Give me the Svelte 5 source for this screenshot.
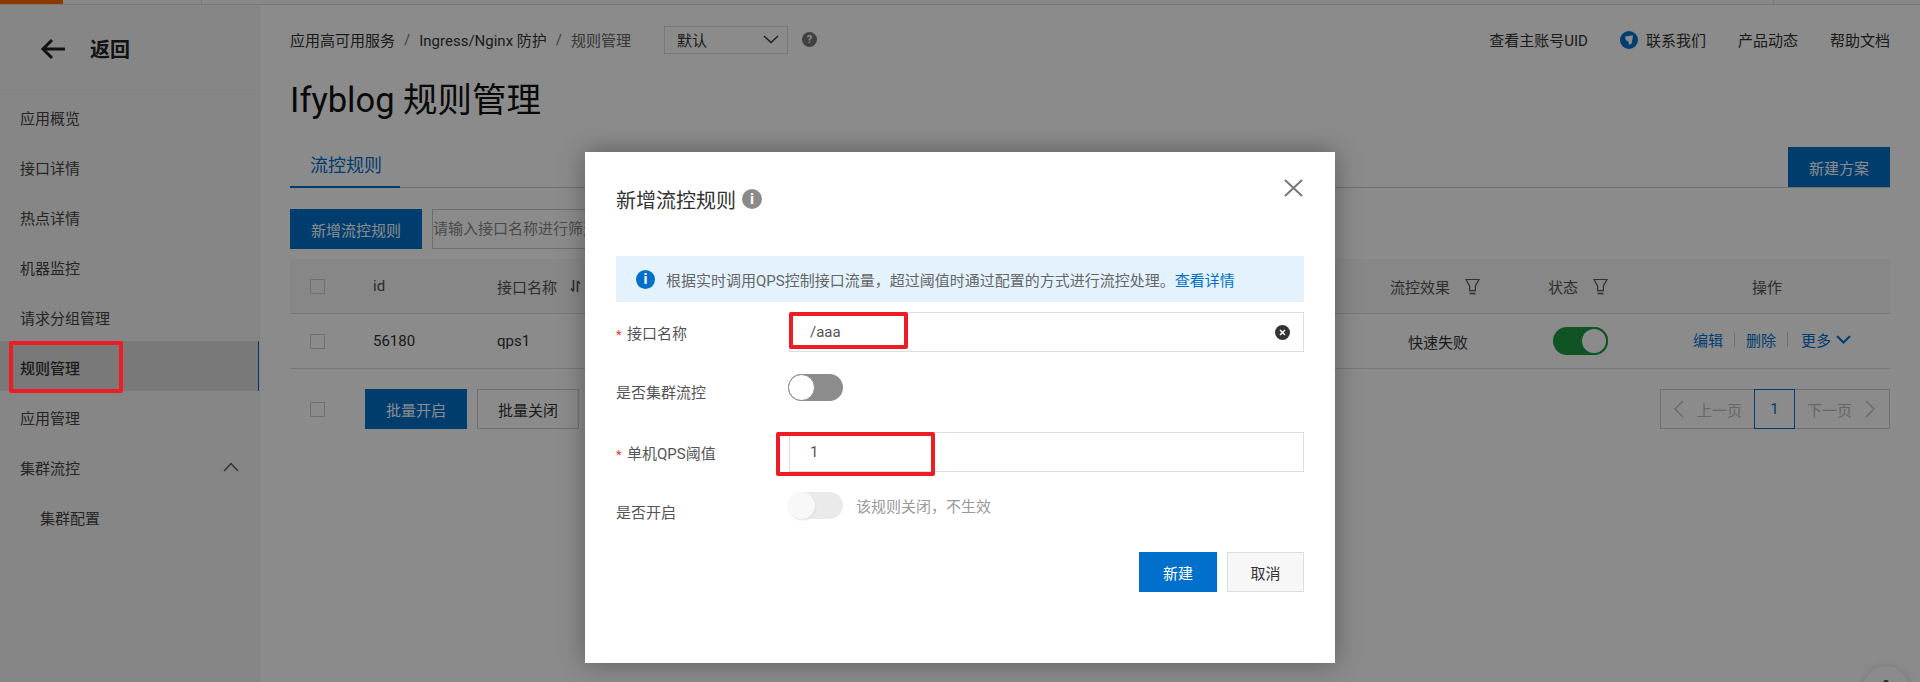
<script lang="ts">
	const navItems = ['应用概览', '接口详情', '热点详情', '机器监控', '请求分组管理', '规则管理', '应用管理'];
	const headerLinks = ['产品动态', '帮助文档'];
</script>

{#snippet filterIcon()}
	<svg class="filter" width="15" height="17" viewBox="0 0 15 17" fill="none" stroke="#5a5a5a" stroke-width="1.2">
		<path d="M1 1.500h13l-3.600 6.500v4.600H4.600V8z" />
		<path d="M4.600 15.500h5.800" stroke-width="1.600" />
	</svg>
{/snippet}

{#snippet checkbox()}
	<span class="checkbox"></span>
{/snippet}

<div class="page">
	<div class="topstrip">
		<span class="strip-brand"></span>
		<span class="strip-tab"></span>
		<span class="strip-rest"></span>
		<span class="strip-end"></span>
	</div>

	<div class="body">
		<aside class="sidebar">
			<div class="back">
				<svg width="26" height="22" viewBox="0 0 26 22" fill="none" stroke="#222" stroke-width="3">
					<path d="M25 11H3M12 2l-9 9 9 9" />
				</svg>
				<span>返回</span>
			</div>
			<nav class="nav">
				{#each navItems as item}
					<div class="nav-item" class:active={item === '规则管理'}>{item}</div>
				{/each}
				<div class="nav-item group">
					集群流控
					<svg width="16" height="10" viewBox="0 0 16 10" fill="none" stroke="#5c5c5c" stroke-width="1.4">
						<path d="M1 9l7-7.500L15 9" />
					</svg>
				</div>
				<div class="nav-item sub">集群配置</div>
			</nav>
		</aside>

		<main class="content">
			<header class="topbar">
				<div class="crumbs">
					<span>应用高可用服务</span>
					<i>/</i>
					<span>Ingress/Nginx 防护</span>
					<i>/</i>
					<span class="current">规则管理</span>
					<div class="select">
						默认
						<svg width="16" height="9" viewBox="0 0 16 9" fill="none" stroke="#333" stroke-width="1.3">
							<path d="M1 1l7 6.500L15 1" />
						</svg>
					</div>
					<span class="help">?</span>
				</div>
				<div class="links">
					<span>查看主账号UID</span>
					<span class="contact">
						<svg width="18" height="18" viewBox="0 0 18 18">
							<circle cx="9" cy="9" r="9" fill="#0070cc" />
							<path d="M5 5.500l8-1.200-1.200 8-2.600 2-.8-3.600L5.800 9z" fill="#fff" />
						</svg>
						联系我们
					</span>
					{#each headerLinks as link}
						<span>{link}</span>
					{/each}
				</div>
			</header>

			<h1>Ifyblog 规则管理</h1>

			<div class="tabs">
				<div class="tab">流控规则</div>
				<button class="btn primary new-plan" type="button">新建方案</button>
			</div>

			<div class="toolbar">
				<button class="btn primary add" type="button">新增流控规则</button>
				<div class="search">请输入接口名称进行筛选</div>
			</div>

			<div class="table">
				<div class="row head">
					<div class="cell-check">{@render checkbox()}</div>
					<div>id</div>
					<div class="name-col">
						接口名称
						<svg width="11" height="14" viewBox="0 0 11 14" fill="none" stroke="#555" stroke-width="1.600">
							<path d="M3.500 1v11M1 9.500L3.500 12.500M7.500 13V2M7.500 2L10 4.500" />
						</svg>
					</div>
					<div></div>
					<div class="with-filter">流控效果 {@render filterIcon()}</div>
					<div class="with-filter">状态 {@render filterIcon()}</div>
					<div class="center">操作</div>
				</div>
				<div class="row data">
					<div class="cell-check">{@render checkbox()}</div>
					<div>56180</div>
					<div>qps1</div>
					<div></div>
					<div class="effect">快速失败</div>
					<div class="status"><span class="switch on"><span class="knob"></span></span></div>
					<div class="actions">
						<span>编辑</span><i></i><span>删除</span><i></i><span class="more">更多</span>
						<svg width="15" height="9" viewBox="0 0 15 9" fill="none" stroke="#0070cc" stroke-width="2">
							<path d="M1 1l6.500 6.500L14 1" />
						</svg>
					</div>
				</div>
			</div>

			<div class="footer">
				<div class="cell-check">{@render checkbox()}</div>
				<button class="btn primary batch" type="button">批量开启</button>
				<button class="btn normal batch" type="button">批量关闭</button>
				<div class="pager">
					<span class="page-nav prev">
						<svg width="11" height="18" viewBox="0 0 11 18" fill="none" stroke="#c4c4c4" stroke-width="1.5"><path d="M10 1L2 9l8 8" /></svg>
						上一页
					</span>
					<span class="page-num">1</span>
					<span class="page-nav next">
						下一页
						<svg width="11" height="18" viewBox="0 0 11 18" fill="none" stroke="#c4c4c4" stroke-width="1.5"><path d="M1 1l8 8-8 8" /></svg>
					</span>
				</div>
			</div>
		</main>
	</div>

	<span class="float-btn"><span class="float-dot"></span></span>

	<div class="mask"></div>

	<div class="modal">
		<div class="modal-title">
			<span>新增流控规则</span>
			<span class="title-info">i</span>
			<svg class="close" width="19" height="18" viewBox="0 0 19 18" fill="none" stroke="#777" stroke-width="2">
				<path d="M1 1l17 16M18 1L1 17" />
			</svg>
		</div>

		<div class="alert">
			<span class="alert-icon">i</span>
			<span>根据实时调用QPS控制接口流量，超过阈值时通过配置的方式进行流控处理。</span>
			<span class="alert-link">查看详情</span>
		</div>

		<div class="form-row first">
			<div class="label"><em>*</em>接口名称</div>
			<div class="input">
				<span>/aaa</span>
				<svg width="15" height="15" viewBox="0 0 15 15">
					<circle cx="7.500" cy="7.500" r="7.500" fill="#333" />
					<path d="M5 5l5 5M10 5l-5 5" stroke="#fff" stroke-width="1.500" />
				</svg>
			</div>
		</div>

		<div class="form-row toggle-row">
			<div class="label plain">是否集群流控</div>
			<span class="switch off"><span class="knob"></span></span>
		</div>

		<div class="form-row qps">
			<div class="label"><em>*</em>单机QPS阈值</div>
			<div class="input"><span>1</span></div>
		</div>

		<div class="form-row toggle-row last">
			<div class="label plain">是否开启</div>
			<span class="switch disabled"><span class="knob"></span></span>
			<span class="hint">该规则关闭，不生效</span>
		</div>

		<div class="modal-actions">
			<button class="btn primary ok" type="button">新建</button>
			<button class="btn cancel" type="button">取消</button>
		</div>
	</div>

	<!-- red annotation boxes drawn over the screenshot -->
	<span class="mark mark-nav"></span>
	<span class="mark mark-name"></span>
	<span class="mark mark-qps"></span>
</div>

<style>
	:global(body) {
		margin: 0;
		background: #fff;
		overflow: hidden;
	}

	.page {
		position: relative;
		width: 1920px;
		height: 682px;
		overflow: hidden;
		background: #fff;
		color: #333;
		font-family: Roboto, 'Noto Sans CJK SC', sans-serif;
		font-size: 15px;
	}

	button {
		font-family: inherit;
		font-size: 15px;
		border: none;
		padding: 0;
	}

	i {
		font-style: normal;
	}

	.topstrip {
		display: flex;
		box-sizing: border-box;
		height: 5px;
		background: #fafafa;
		border-bottom: 1px solid #e0e0e0;
	}

	.strip-brand {
		width: 63px;
		background: #ff6a00;
	}

	.strip-tab {
		width: 138px;
		border-right: 1px solid #ddd;
	}

	.strip-rest {
		width: 1571px;
		border-right: 1px solid #ddd;
	}

	.strip-end {
		flex: 1;
	}

	.body {
		display: flex;
		height: 677px;
	}

	.sidebar {
		width: 259px;
		flex: none;
		background: #f6f6f6;
		border-right: 1px solid #f0f0f0;
	}

	.back {
		display: flex;
		align-items: center;
		gap: 24px;
		height: 86px;
		padding-left: 40px;
		padding-top: 2px;
		border-bottom: 1px solid #ececec;
		box-sizing: border-box;
		font-size: 20px;
		font-weight: 700;
		color: #222;
	}

	.nav-item {
		display: flex;
		align-items: center;
		justify-content: space-between;
		box-sizing: border-box;
		height: 50px;
		padding: 2px 20px 0;
		color: #444;
	}

	.nav-item.active {
		background: #dfdfdf;
		box-shadow: inset -1px 0 0 #0070cc;
		font-weight: 500;
		color: #333;
	}

	.nav-item.sub {
		padding-left: 40px;
	}

	.content {
		flex: 1;
		padding: 0 30px;
		min-width: 0;
	}

	.topbar {
		display: flex;
		align-items: center;
		justify-content: space-between;
		height: 69px;
	}

	.crumbs {
		display: flex;
		align-items: center;
	}

	.crumbs i {
		margin: 0 9px;
		color: #777;
	}

	.crumbs .current {
		color: #666;
	}

	.select {
		display: flex;
		align-items: center;
		justify-content: space-between;
		box-sizing: border-box;
		width: 124px;
		height: 28px;
		margin-left: 33px;
		padding: 0 8px 0 12px;
		border: 1px solid #ddd;
	}

	.help {
		width: 15px;
		height: 15px;
		margin-left: 14px;
		border-radius: 50%;
		background: #777;
		color: #fff;
		font-size: 11px;
		font-weight: 700;
		line-height: 15px;
		text-align: center;
	}

	.links {
		display: flex;
		align-items: center;
		gap: 32px;
	}

	.contact {
		display: flex;
		align-items: center;
		gap: 8px;
	}

	h1 {
		margin: 1px 0 0;
		height: 51px;
		font-size: 34.5px;
		font-weight: 400;
		line-height: 50px;
		color: #111;
	}

	.tabs {
		display: flex;
		align-items: flex-end;
		justify-content: space-between;
		height: 62px;
		border-bottom: 1px solid #ccc;
		box-sizing: border-box;
	}

	.tab {
		box-sizing: border-box;
		width: 110px;
		height: 40px;
		margin-bottom: -1px;
		padding-left: 20px;
		border-bottom: 2px solid #0070cc;
		color: #0070cc;
		font-size: 18px;
		line-height: 36px;
	}

	.btn {
		height: 40px;
		flex: none;
	}

	.btn.primary {
		background: #0070cc;
		color: #fff;
	}

	.btn.normal {
		box-sizing: border-box;
		background: transparent;
		border: 1px solid #ccc;
		color: #333;
	}

	.new-plan {
		width: 102px;
	}

	.toolbar {
		display: flex;
		gap: 10px;
		margin-top: 21px;
	}

	.add {
		width: 132px;
	}

	.search {
		box-sizing: border-box;
		width: 340px;
		height: 40px;
		border: 1px solid #ccc;
		color: #888;
		line-height: 38px;
	}

	.table {
		margin-top: 10px;
	}

	.row {
		display: grid;
		grid-template-columns: 83px 124px 200px 693px 158px 96px 246px;
		align-items: center;
		box-sizing: border-box;
		border-bottom: 1px solid #ddd;
	}

	.row.head {
		height: 55px;
		background: #f7f7f7;
		color: #555;
	}

	.row.data {
		height: 55px;
	}

	.name-col,
	.with-filter {
		display: flex;
		align-items: center;
	}

	.name-col svg {
		margin-left: 13px;
	}

	.filter {
		margin-left: 15px;
	}

	.center {
		text-align: center;
	}

	.cell-check {
		padding-left: 20px;
	}

	.checkbox {
		display: block;
		box-sizing: border-box;
		width: 15px;
		height: 15px;
		border: 1px solid #ccc;
	}

	.effect {
		padding-left: 18px;
	}

	.status {
		display: flex;
		padding-left: 5px;
	}

	.switch {
		display: flex;
		box-sizing: border-box;
		width: 55px;
		height: 28px;
		border-radius: 14px;
	}

	.switch .knob {
		width: 28px;
		height: 28px;
		box-sizing: border-box;
		border-radius: 50%;
		background: #fff;
	}

	.switch.on {
		justify-content: flex-end;
		background: #1e9a42;
	}

	.switch.on .knob {
		border: 2px solid #1e9a42;
	}

	.switch.off {
		background: #8c8c8c;
	}

	.switch.off .knob {
		border: 1px solid #8c8c8c;
	}

	.switch.disabled {
		background: #eaeaea;
	}

	.switch.disabled .knob {
		background: #f8f8f8;
		box-shadow: 1px 1px 2px #ddd;
	}

	.actions {
		display: flex;
		align-items: center;
		padding-left: 49px;
		padding-bottom: 4px;
		color: #0070cc;
	}

	.actions span {
		flex: none;
	}

	.actions i {
		flex: none;
		width: 1px;
		height: 15px;
		margin: 0 11px;
		background: #ccc;
	}

	.actions .more {
		margin-left: 2px;
	}

	.actions svg {
		flex: none;
		margin-left: 5px;
	}

	.footer {
		display: flex;
		align-items: center;
		margin-top: 20px;
	}

	.footer .cell-check {
		width: 75px;
		flex: none;
		box-sizing: border-box;
		padding-left: 20px;
	}

	.batch {
		width: 102px;
	}

	.btn.normal.batch {
		margin-left: 10px;
	}

	.pager {
		display: flex;
		box-sizing: border-box;
		width: 230px;
		height: 40px;
		margin-left: auto;
		border: 1px solid #ccc;
		color: #bbb;
		align-items: center;
	}

	.page-nav {
		display: flex;
		align-items: center;
		gap: 13px;
		box-sizing: border-box;
		width: 93px;
		justify-content: center;
	}

	.page-num {
		box-sizing: border-box;
		width: 41px;
		height: 40px;
		flex: none;
		border: 1px solid #0070cc;
		color: #0070cc;
		line-height: 38px;
		text-align: center;
	}

	.float-btn {
		position: absolute;
		right: 11px;
		bottom: -30px;
		width: 46px;
		height: 46px;
		border-radius: 50%;
		background: #fff;
		box-shadow: 0 0 8px rgba(0, 0, 0, 0.15);
	}

	.float-dot {
		display: block;
		width: 6px;
		height: 6px;
		margin: 14px auto 0;
		border-radius: 50%;
		background: #444;
	}

	.mask {
		position: absolute;
		inset: 0;
		background: rgba(0, 0, 0, 0.455);
	}

	.modal {
		position: absolute;
		left: 585px;
		top: 152px;
		box-sizing: border-box;
		width: 750px;
		height: 511px;
		padding: 0 31px;
		background: #fff;
		box-shadow: 0 0 24px rgba(0, 0, 0, 0.35);
	}

	.modal-title {
		display: flex;
		align-items: center;
		gap: 6px;
		height: 94px;
		font-size: 20px;
		color: #333;
		position: relative;
	}

	.title-info {
		width: 20px;
		height: 20px;
		border-radius: 50%;
		background: #8a8a8a;
		color: #fff;
		font-size: 15px;
		font-weight: 700;
		line-height: 20px;
		text-align: center;
	}

	.close {
		position: absolute;
		right: 1px;
		top: 27px;
	}

	.alert {
		display: flex;
		align-items: center;
		height: 46px;
		margin-top: 10px;
		padding-left: 20px;
		background: #e3f2fd;
		color: #666;
	}

	.alert-icon {
		width: 19px;
		height: 19px;
		margin-right: 11px;
		border-radius: 50%;
		background: #0070cc;
		color: #fff;
		font-size: 15px;
		font-weight: 700;
		line-height: 19px;
		text-align: center;
	}

	.alert-link {
		color: #0070cc;
	}

	.form-row {
		display: flex;
		align-items: center;
	}

	.form-row.first {
		margin-top: 10px;
	}

	.form-row.qps {
		margin-top: 31px;
	}

	.toggle-row {
		margin-top: 22px;
		height: 27px;
	}

	.form-row.last {
		margin-top: 20px;
	}

	.label {
		width: 173px;
		flex: none;
		color: #555;
	}

	.label em {
		display: inline-block;
		width: 11px;
		color: #e53935;
		font-style: normal;
		font-size: 13px;
	}

	.label.plain {
		position: relative;
		top: 4px;
	}

	.last .label.plain {
		top: 6px;
	}

	.form-row .switch {
		height: 27px;
		margin-left: -1px;
	}

	.form-row .switch .knob {
		width: 27px;
		height: 27px;
	}

	.input {
		display: flex;
		align-items: center;
		justify-content: space-between;
		box-sizing: border-box;
		flex: 1;
		height: 40px;
		padding: 0 13px 0 20px;
		border: 1px solid #ddd;
		color: #555;
	}

	.hint {
		margin-left: 13px;
		color: #999;
	}

	.modal-actions {
		display: flex;
		justify-content: flex-end;
		gap: 10px;
		margin-top: 33px;
	}

	.ok {
		width: 78px;
	}

	.btn.cancel {
		box-sizing: border-box;
		width: 77px;
		background: #f7f7f7;
		border: 1px solid #ddd;
		color: #333;
	}

	.mark {
		position: absolute;
		box-sizing: border-box;
		border: 4px solid #ee1c25;
		border-radius: 2px;
	}

	.mark-nav {
		left: 9px;
		top: 341px;
		width: 114px;
		height: 52px;
	}

	.mark-name {
		left: 789px;
		top: 312px;
		width: 119px;
		height: 37px;
	}

	.mark-qps {
		left: 776px;
		top: 432px;
		width: 159px;
		height: 44px;
	}
</style>
